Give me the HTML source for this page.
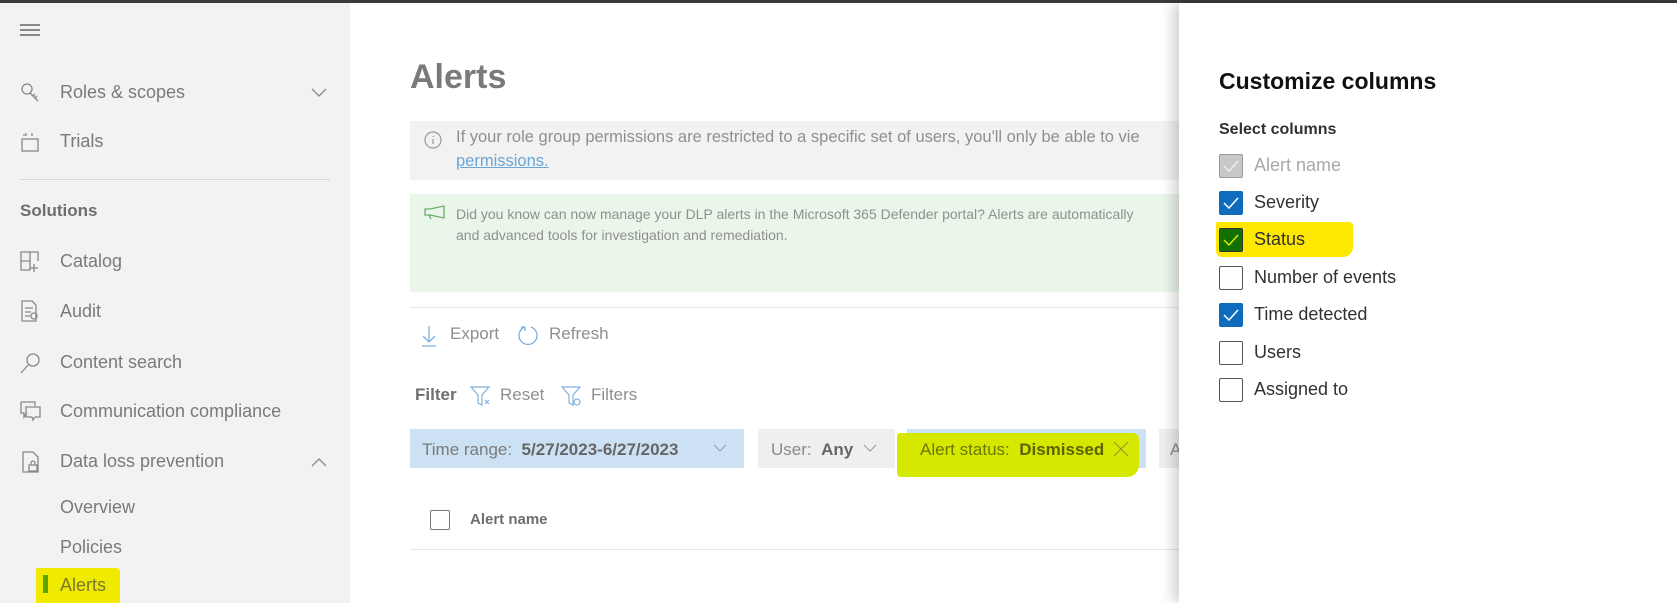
<!DOCTYPE html>
<html><head><style>
*{margin:0;padding:0;box-sizing:border-box}
body{width:1677px;height:603px;overflow:hidden;background:#fff;font-family:"Liberation Sans",sans-serif;position:relative}
.a{position:absolute;white-space:nowrap}
.sb{position:absolute;left:0;top:3px;width:350px;height:600px;background:#f2f2f2}
.nav{font-size:18px;color:#7a7a7a;left:60px}
.cb{position:absolute;left:1219px;width:24px;height:24px;border:1.5px solid #555;border-radius:2px;background:#fff}
.cbl{position:absolute;left:1254px;font-size:18px;color:#323130}
.chk{background:#0f6cbd;border-color:#0f6cbd}
</style></head><body>
<div class="a" style="left:0;top:0;width:1677px;height:3px;background:#3a3a3a"></div>
<div class="sb"></div>
<div class="a" style="left:20px;top:24px;width:20px;height:1.5px;background:#888;box-shadow:0 5px 0 #888,0 10px 0 #888"></div>
<svg class="a" style="left:20px;top:82px" width="22" height="22" viewBox="0 0 22 22" fill="none" stroke="#888" stroke-width="1.3"><circle cx="7" cy="7" r="5"/><path d="M10 11l8 8M15 16l2-2M13 14l2-2"/></svg>
<div class="a nav" style="top:82px">Roles &amp; scopes</div>
<svg class="a" style="left:311px;top:88px" width="16" height="10"><path d="M1 1l7 7 7-7" stroke="#888" fill="none" stroke-width="1.3"/></svg>
<svg class="a" style="left:20px;top:131px" width="22" height="22" fill="none" stroke="#888" stroke-width="1.3"><rect x="2" y="8" width="16" height="12"/><path d="M6 2v3M12 2v3M3 4h2"/></svg>
<div class="a nav" style="top:131px">Trials</div>
<div class="a" style="left:20px;top:179px;width:310px;height:1px;background:#d6d6d6"></div>
<div class="a" style="left:20px;top:201px;font-size:17px;color:#6e6e6e;font-weight:bold">Solutions</div>
<svg class="a" style="left:20px;top:251px" width="22" height="22" fill="none" stroke="#888" stroke-width="1.3"><path d="M1 1h9v9H1zM10 1h8v9M1 10v9h9v-9M14 13v8M10 17h8"/></svg>
<div class="a nav" style="top:251px">Catalog</div>
<svg class="a" style="left:20px;top:300px" width="22" height="22" fill="none" stroke="#888" stroke-width="1.3"><path d="M2 1h10l4 4v16H2zM5 8h8M5 12h6M5 16h5"/><circle cx="14" cy="16" r="3"/></svg>
<div class="a nav" style="top:301px">Audit</div>
<svg class="a" style="left:20px;top:352px" width="22" height="22" fill="none" stroke="#888" stroke-width="1.3"><circle cx="13" cy="8" r="6"/><path d="M9 12L1 21"/></svg>
<div class="a nav" style="top:352px">Content search</div>
<svg class="a" style="left:20px;top:401px" width="22" height="22" fill="none" stroke="#888" stroke-width="1.3"><path d="M1 1h14v4M1 1v11h3v4l3-4M6 6h14v10h-5l-2 3-1-3H6z"/></svg>
<div class="a nav" style="top:401px">Communication compliance</div>
<svg class="a" style="left:21px;top:450px" width="20" height="24" fill="none" stroke="#888" stroke-width="1.3"><path d="M2 22V2h10l5 5v15zM8 15h8v6H8zM10 15v-2a2 2 0 014 0v2"/></svg>
<div class="a nav" style="top:451px">Data loss prevention</div>
<svg class="a" style="left:311px;top:457px" width="16" height="10"><path d="M1 9l7-7 7 7" stroke="#888" fill="none" stroke-width="1.3"/></svg>
<div class="a nav" style="top:497px">Overview</div>
<div class="a nav" style="top:537px">Policies</div>
<div class="a" style="left:36px;top:568px;width:84px;height:35px;background:#f0ea00;border-radius:2px 4px 0 0"></div>
<div class="a" style="left:43px;top:575px;width:5px;height:18px;background:#5aa700"></div>
<div class="a nav" style="top:575px;color:#7a7a2a">Alerts</div>

<div class="a" style="left:410px;top:58px;font-size:34px;font-weight:bold;color:#7a7a7a">Alerts</div>
<div class="a" style="left:410px;top:121px;width:800px;height:59px;background:#f2f2f2"></div>
<svg class="a" style="left:424px;top:131px" width="18" height="18" fill="none" stroke="#999" stroke-width="1.2"><circle cx="9" cy="9" r="8"/><path d="M9 8v5M9 5v1"/></svg>
<div class="a" style="left:456px;top:128px;font-size:16.5px;color:#8f8f8f">If your role group permissions are restricted to a specific set of users, you'll only be able to vie</div>
<div class="a" style="left:456px;top:152px;font-size:16.5px;color:#6aa6d8;text-decoration:underline">permissions.</div>
<div class="a" style="left:410px;top:194px;width:800px;height:98px;background:#eaf6ea"></div>
<svg class="a" style="left:424px;top:205px" width="22" height="14" fill="none" stroke="#6ab06a" stroke-width="1.3"><path d="M1 4h5l14-3v12L6 10H1zM5 10l2 4"/></svg>
<div class="a" style="left:456px;top:204px;font-size:14px;color:#8f8f8f;line-height:21px">Did you know can now manage your DLP alerts in the Microsoft 365 Defender portal? Alerts are automatically<br>and advanced tools for investigation and remediation.</div>
<div class="a" style="left:410px;top:307px;width:800px;height:1px;background:#e6e6e6"></div>
<svg class="a" style="left:421px;top:325px" width="16" height="22" fill="none" stroke="#7fb0e0" stroke-width="1.3"><path d="M8 1v16M2 11l6 6 6-6M1 21h14"/></svg>
<div class="a" style="left:450px;top:324px;font-size:17px;color:#8f8f8f">Export</div>
<svg class="a" style="left:518px;top:324px" width="22" height="22" fill="none" stroke="#7fb0e0" stroke-width="1.3"><path d="M7 3a9 9 0 1 0 6 0M7 3v4M7 3H3"/></svg>
<div class="a" style="left:549px;top:324px;font-size:17px;color:#8f8f8f">Refresh</div>
<div class="a" style="left:415px;top:385px;font-size:17px;color:#6e6e6e;font-weight:bold">Filter</div>
<svg class="a" style="left:470px;top:385px" width="22" height="22" fill="none" stroke="#7fb0e0" stroke-width="1.2"><path d="M1 2h18l-7 8v10l-4-2v-8z"/><path d="M15 15l4 4M19 15l-4 4"/></svg>
<div class="a" style="left:500px;top:385px;font-size:17px;color:#8f8f8f">Reset</div>
<svg class="a" style="left:561px;top:385px" width="22" height="22" fill="none" stroke="#7fb0e0" stroke-width="1.2"><path d="M1 2h18l-7 8v10l-4-2v-8z"/><circle cx="16" cy="17" r="3"/></svg>
<div class="a" style="left:591px;top:385px;font-size:17px;color:#8f8f8f">Filters</div>

<div class="a" style="left:410px;top:429px;width:334px;height:39px;background:#cce2f4"></div>
<div class="a" style="left:422px;top:440px;font-size:17px;color:#7a7a7a">Time range:&nbsp; <b style="color:#666">5/27/2023-6/27/2023</b></div>
<svg class="a" style="left:713px;top:444px" width="14" height="9"><path d="M1 1l6 6 6-6" stroke="#999" fill="none"/></svg>
<div class="a" style="left:758px;top:429px;width:137px;height:39px;background:#efefef"></div>
<div class="a" style="left:771px;top:440px;font-size:17px;color:#8a8a8a">User:&nbsp; <b style="color:#666">Any</b></div>
<svg class="a" style="left:863px;top:444px" width="14" height="9"><path d="M1 1l6 6 6-6" stroke="#999" fill="none"/></svg>
<div class="a" style="left:907px;top:429px;width:239px;height:39px;background:#cce2f4"></div>
<div class="a" style="left:897px;top:433px;width:242px;height:44px;background:#d4e800;border-radius:3px 6px 12px 4px"></div>
<div class="a" style="left:920px;top:440px;font-size:17px;color:#6b7a00">Alert status:&nbsp; <b style="color:#5b6400">Dismissed</b></div>
<svg class="a" style="left:1113px;top:441px" width="16" height="16"><path d="M1 1l14 14M15 1L1 15" stroke="#8a9a2a" fill="none"/></svg>
<div class="a" style="left:1159px;top:429px;width:30px;height:39px;background:#efefef"></div>
<div class="a" style="left:1170px;top:440px;font-size:17px;color:#8a8a8a">A</div>
<div class="a" style="left:430px;top:510px;width:20px;height:20px;border:1.3px solid #777;border-radius:2px"></div>
<div class="a" style="left:470px;top:511px;font-size:15px;color:#6e6e6e;font-weight:bold">Alert name</div>
<div class="a" style="left:410px;top:549px;width:800px;height:1px;background:#e6e6e6"></div>

<div class="a" style="left:1179px;top:3px;width:498px;height:600px;background:#fff;box-shadow:-6px 0 12px rgba(0,0,0,.18)"></div>
<div class="a" style="left:1219px;top:68px;font-size:23px;font-weight:bold;color:#111">Customize columns</div>
<div class="a" style="left:1219px;top:121px;font-size:16px;font-weight:bold;color:#323130">Select columns</div>
<div class="cb" style="top:154px;background:#c8c8c8;border-color:#999"></div>
<svg class="a" style="left:1223px;top:160px" width="16" height="12"><path d="M1 6l5 5 9-10" stroke="#eee" fill="none" stroke-width="1.5"/></svg>
<div class="cbl" style="top:155px;color:#a8a8a8">Alert name</div>
<div class="cb chk" style="top:191px"></div>
<svg class="a" style="left:1223px;top:197px" width="16" height="12"><path d="M1 6l5 5 9-10" stroke="#fff" fill="none" stroke-width="1.5"/></svg>
<div class="cbl" style="top:192px">Severity</div>
<div class="a" style="left:1216px;top:222px;width:137px;height:35px;background:#ffe800;border-radius:2px 4px 10px 6px"></div>
<div class="cb" style="top:228px;background:#117000;border-color:#333"></div>
<svg class="a" style="left:1223px;top:234px" width="16" height="12"><path d="M1 6l5 5 9-10" stroke="#d8e800" fill="none" stroke-width="1.5"/></svg>
<div class="cbl" style="top:229px">Status</div>
<div class="cb" style="top:266px"></div>
<div class="cbl" style="top:267px">Number of events</div>
<div class="cb chk" style="top:303px"></div>
<svg class="a" style="left:1223px;top:309px" width="16" height="12"><path d="M1 6l5 5 9-10" stroke="#fff" fill="none" stroke-width="1.5"/></svg>
<div class="cbl" style="top:304px">Time detected</div>
<div class="cb" style="top:341px"></div>
<div class="cbl" style="top:342px">Users</div>
<div class="cb" style="top:378px"></div>
<div class="cbl" style="top:379px">Assigned to</div>
</body></html>
